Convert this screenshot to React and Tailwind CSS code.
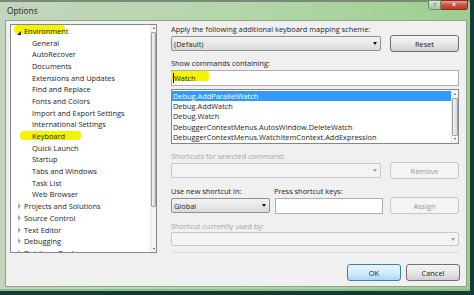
const tree = [
  { label: 'Environment', root: true, open: true, mark: 'env' },
  { label: 'General' },
  { label: 'AutoRecover' },
  { label: 'Documents' },
  { label: 'Extensions and Updates' },
  { label: 'Find and Replace' },
  { label: 'Fonts and Colors' },
  { label: 'Import and Export Settings' },
  { label: 'International Settings' },
  { label: 'Keyboard', mark: 'kbd' },
  { label: 'Quick Launch' },
  { label: 'Startup' },
  { label: 'Tabs and Windows' },
  { label: 'Task List' },
  { label: 'Web Browser' },
  { label: 'Projects and Solutions', root: true },
  { label: 'Source Control', root: true },
  { label: 'Text Editor', root: true },
  { label: 'Debugging', root: true },
  { label: 'Database Tools', root: true },
]

const commands = [
  'Debug.AddParallelWatch',
  'Debug.AddWatch',
  'Debug.Watch',
  'DebuggerContextMenus.AutosWindow.DeleteWatch',
  'DebuggerContextMenus.WatchItemContext.AddExpression',
]

const Arrow = ({ disabled }) => (
  <span
    className={`ml-auto mr-[3px] w-0 h-0 border-l-[2px] border-r-[2px] border-t-[3px] border-l-transparent border-r-transparent ${disabled ? 'border-t-[#a0a0a0]' : 'border-t-[#111]'}`}
  />
)

const Combo = ({ value, disabled, className = '' }) => (
  <div
    className={`flex items-center rounded-[2px] border pl-[2px] ${disabled ? 'border-[#c4c8cc] bg-[#f4f4f4]' : 'border-[#8e8f8f] bg-gradient-to-b from-[#f3f3f3] to-[#dcdcdc]'} ${className}`}
  >
    <span className="text-[#1e1e1e]">{value}</span>
    <Arrow disabled={disabled} />
  </div>
)

const Btn = ({ label, disabled, primary, className = '' }) => (
  <div
    className={`flex items-center justify-center rounded-[3px] border ${
      disabled
        ? 'border-[#c4c8cc] bg-[#f4f4f4] text-[#9a9a9a]'
        : primary
          ? 'border-[#3c7fb1] bg-gradient-to-b from-[#e9f5fc] via-[#d5ecfa] to-[#a9d9f5] text-[#1e1e1e]'
          : 'border-[#707070] bg-gradient-to-b from-[#f4f4f4] via-[#e8e8e8] to-[#d0d0d0] text-[#1e1e1e]'
    } ${className}`}
  >
    {label}
  </div>
)

const App = () => {
  return (
    <div className="w-[474px] h-[295px] bg-[#18393b] font-['Open_Sans',sans-serif] text-[7.4px] leading-[10px] text-[#1e1e1e] overflow-hidden">
      <div className="w-[470px] h-[291px] flex flex-col border-t-[2px] border-t-[#7b8979] bg-gradient-to-r from-[#c3d5bd] via-[#b4d6aa] to-[#9ccf8f] border-b-[2px] border-b-[#8cc084]">
        {/* title bar */}
        <div className="relative h-[18px] flex items-center pl-[7px]">
          <span className="text-[8.3px] text-[#1a1a1a]">Options</span>
          <div className="absolute top-[-2px] right-[2px] flex">
            <div className="w-[13px] h-[10px] flex items-center justify-center rounded-bl-[3px] border border-[#6f8a6a] bg-gradient-to-b from-[#d8e6d3] to-[#a9c4a1] text-[6px] text-[#3a4a38]">
              ?
            </div>
            <div className="w-[27px] h-[10px] flex items-center justify-center rounded-br-[3px] border border-l-0 border-[#7a3028] bg-gradient-to-b from-[#e8a08f] via-[#d0503d] to-[#c23a26] text-[7px] font-bold text-white">
              ×
            </div>
          </div>
        </div>

        {/* client area */}
        <div className="flex-1 ml-[5px] mr-[3px] mb-[2px] border border-[#8ca386] bg-[#f0f0f0] flex pl-[4px] pt-[3px]">
          {/* tree */}
          <div className="w-[147px] h-[229px] border border-[#828790] bg-white flex overflow-hidden">
            <div className="flex-1 overflow-hidden">
              {tree.map((t) => (
                <div key={t.label} className="relative h-[11.7px] flex items-center">
                  {t.mark === 'env' && (
                    <span className="absolute left-[3px] top-[0px] w-[51px] h-[9px] rounded-[4px] bg-[#f4f400]" />
                  )}
                  {t.mark === 'kbd' && (
                    <span className="absolute left-[9px] top-[1px] w-[61px] h-[9px] rounded-[4px] bg-[#f4f400]" />
                  )}
                  {t.root ? (
                    <>
                      {t.open ? (
                        <span className="relative ml-[6px] w-0 h-0 border-l-[4px] border-t-[4px] border-l-transparent border-t-transparent border-b-[0px] border-r-[0px] border-[#262626] [border-bottom:4px_solid_#262626]" />
                      ) : (
                        <span className="relative ml-[7px] w-0 h-0 border-t-[3px] border-b-[3px] border-l-[3px] border-t-transparent border-b-transparent border-l-[#a8a8a8]" />
                      )}
                      <span className={`relative ${t.open ? 'ml-[3px]' : 'ml-[3px]'}`}>{t.label}</span>
                    </>
                  ) : (
                    <span className="relative ml-[21px]">{t.label}</span>
                  )}
                </div>
              ))}
            </div>
            {/* scrollbar */}
            <div className="w-[6px] h-full border-l border-[#e6e6e6] bg-[#f4f4f4] flex flex-col items-center">
              <span className="mt-[2px] w-0 h-0 border-l-[1.5px] border-r-[1.5px] border-b-[2px] border-l-transparent border-r-transparent border-b-[#555]" />
              <div className="mt-[3px] w-[5px] h-[175px] rounded-[1px] border border-[#9da1a6] bg-gradient-to-r from-[#f2f2f2] to-[#dadada]" />
              <span className="mt-auto mb-[2px] w-0 h-0 border-l-[1.5px] border-r-[1.5px] border-t-[2px] border-l-transparent border-r-transparent border-t-[#555]" />
            </div>
          </div>

          {/* right pane */}
          <div className="ml-[14px] w-[288px] flex flex-col">
            <div className="h-[10px] mt-[0px]">Apply the following additional keyboard mapping scheme:</div>
            <div className="mt-[1px] h-[17px] flex items-center">
              <Combo value="(Default)" className="w-[210px] h-[15px]" />
              <Btn label="Reset" className="ml-[9px] w-[69px] h-[17px]" />
            </div>
            <div className="mt-[6px] h-[10px]">Show commands containing:</div>
            <div className="relative mt-[2px] h-[16px] border border-[#abadb3] bg-white flex items-center">
              <span className="absolute left-[-1px] top-[0px] w-[38px] h-[10px] rounded-[3px] bg-[#f4f400]" />
              <span className="relative ml-[1px] w-px h-[10px] bg-black" />
              <span className="relative">Watch</span>
            </div>
            <div className="mt-[3px] h-[55px] border border-[#828790] bg-white flex">
              <div className="flex-1 pt-[1px]">
                {commands.map((c, i) => (
                  <div
                    key={c}
                    className={`h-[10.2px] flex items-center pl-[1px] ${i === 0 ? 'bg-[#3399ff] text-white' : ''}`}
                  >
                    {c}
                  </div>
                ))}
              </div>
              <div className="w-[7px] border-l border-[#e6e6e6] bg-[#f4f4f4] flex flex-col items-center">
                <span className="mt-[3px] w-0 h-0 border-l-[1.5px] border-r-[1.5px] border-b-[2px] border-l-transparent border-r-transparent border-b-[#555]" />
                <div className="mt-[3px] w-[6px] h-[38px] rounded-[1px] border border-[#9da1a6] bg-gradient-to-r from-[#f2f2f2] to-[#dadada]" />
                <span className="mt-auto mb-[3px] w-0 h-0 border-l-[1.5px] border-r-[1.5px] border-t-[2px] border-l-transparent border-r-transparent border-t-[#555]" />
              </div>
            </div>
            <div className="mt-[7px] h-[10px] text-[#a6a6a6]">Shortcuts for selected command:</div>
            <div className="mt-[1px] h-[17px] flex items-center">
              <Combo disabled className="w-[210px] h-[15px]" />
              <Btn label="Remove" disabled className="ml-[9px] w-[69px] h-[17px]" />
            </div>
            <div className="mt-[7px] h-[10px] flex">
              <span className="w-[103px]">Use new shortcut in:</span>
              <span>Press shortcut keys:</span>
            </div>
            <div className="mt-[1px] h-[17px] flex items-center">
              <Combo value="Global" className="w-[99px] h-[15px]" />
              <div className="ml-[5px] w-[108px] h-[16px] border border-[#abadb3] bg-white" />
              <Btn label="Assign" disabled className="ml-[7px] w-[69px] h-[17px]" />
            </div>
            <div className="mt-[7px] h-[10px] text-[#a6a6a6]">Shortcut currently used by:</div>
            <Combo disabled className="mt-[1px] w-[288px] h-[14px]" />
            <div className="mt-[6px] h-px bg-[#d5dfe5]" />
            <div className="mt-[11px] flex justify-end">
              <Btn label="OK" primary className="w-[54px] h-[17px]" />
              <Btn label="Cancel" className="ml-[5px] w-[54px] h-[17px] -mr-[1px]" />
            </div>
          </div>
        </div>
      </div>
    </div>
  )
}

export default App
